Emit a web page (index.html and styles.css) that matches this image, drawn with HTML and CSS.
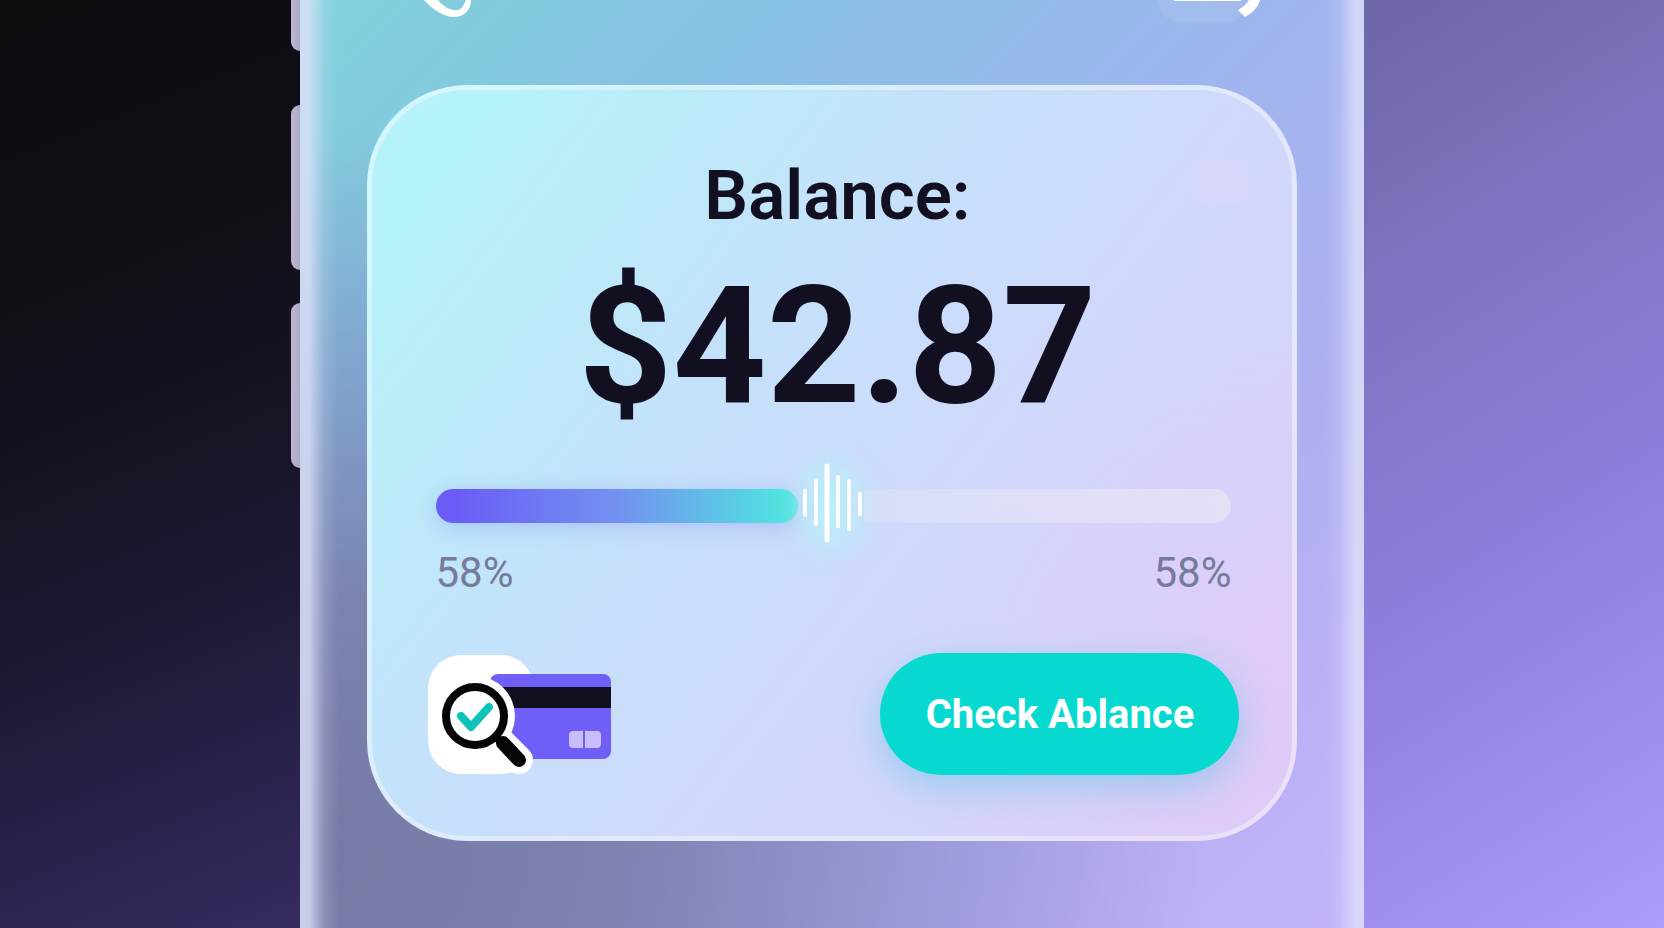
FILE: index.html
```html
<!DOCTYPE html>
<html lang="en">
<head>
  <meta charset="UTF-8">
  <meta name="viewport" content="width=device-width, initial-scale=1.0">
  <title>Balance</title>
  <link rel="stylesheet" href="styles.css">
</head>
<body>
  <div class="side side-left">
    <span class="key key-short"></span>
    <span class="key"></span>
    <span class="key"></span>
  </div>

  <main class="phone">
    <header class="topbar">
      <svg class="top-icon" width="50" height="24" viewBox="0 0 50 24" aria-hidden="true">
        <path fill="#fff" d="M0 0C9 10 20 17 30 17C40 17 47 10 47 0H42C40 5 37 10 34 10C27 11 20 7 14 0Z"/>
      </svg>
      <svg class="top-icon" width="104" height="24" viewBox="0 0 104 24" aria-hidden="true">
        <path fill="#fff" fill-opacity="0.07" d="M0 0C2 14 12 23 26 23H68C78 23 84 18 87 10L96 0Z"/>
        <path fill="#fff" d="M16 0H84V1H18Z"/>
        <path fill="#fff" d="M92 0H103C101 7 97 12 88 17L81 10C86 7 90 4 92 0Z"/>
      </svg>
    </header>

    <section class="card">
      <span class="ghost"></span>
      <h1 class="title">Balance:</h1>
      <p class="amount">$42.87</p>

      <div class="progress" role="progressbar" aria-label="Balance used" aria-valuenow="58" aria-valuemin="0" aria-valuemax="100">
        <div class="progress-fill"></div>
        <svg class="wave" width="66" height="86" viewBox="0 0 66 86" aria-hidden="true">
          <g stroke="#fff" stroke-width="4" stroke-linecap="round">
            <path d="M7 28V52M18 18V61M40 14V63M51 18V66M62 31V51"/>
            <path stroke-width="5" d="M29 3V77"/>
          </g>
        </svg>
        <div class="progress-rest"></div>
      </div>
      <div class="labels">
        <span>58%</span>
        <span>58%</span>
      </div>

      <div class="actions">
        <svg class="card-icon" width="184" height="120" viewBox="0 0 184 120" aria-hidden="true">
          <rect width="106" height="119" y="1" rx="33" fill="#fff"/>
          <rect x="62" y="20" width="121" height="85" rx="8" fill="#6f5ff6"/>
          <rect x="62" y="33" width="121" height="21" fill="#120f20"/>
          <path d="M145 77H155V94H145Q141 94 141 90V81Q141 77 145 77Z" fill="#c9bdfd"/>
          <path d="M157 77H169Q173 77 173 81V90Q173 94 169 94H157Z" fill="#c9bdfd"/>
          <!-- white halo behind the magnifier -->
          <circle cx="47" cy="62" r="40" fill="#fff"/>
          <rect x="60" y="88" width="20" height="20" fill="#fff"/>
          <path d="M73 88L91 106" stroke="#fff" stroke-width="28" stroke-linecap="round"/>
          <circle cx="47" cy="62" r="29" fill="#fff" stroke="#050505" stroke-width="8"/>
          <path d="M66 81L74 89" stroke="#050505" stroke-width="8"/>
          <path d="M75 89L91 106" stroke="#050505" stroke-width="14" stroke-linecap="round"/>
          <path d="M33 62L43 73L61 53" fill="none" stroke="#10c3b8" stroke-width="8" stroke-linecap="round" stroke-linejoin="round"/>
        </svg>
        <button class="check-btn" type="button">Check Ablance</button>
      </div>
    </section>
  </main>

  <div class="side side-right"></div>
</body>
</html>
```
FILE: styles.css
```css
* {
  box-sizing: border-box;
}

body {
  margin: 0;
  min-height: 100vh;
  display: grid;
  grid-template-columns: 1fr 64% 1fr;
  font-family: Roboto, Inter, sans-serif;
  color: #120f20;
  background-color: #0b0b10;
}

/* Backdrop on both sides of the phone */
.side-left {
  display: flex;
  flex-direction: column;
  align-items: flex-end;
  gap: 33px;
  background: linear-gradient(158deg, #0d0c11 0%, #100f16 32%, #1b1730 62%, #352b60 100%);
}

.side-right {
  background: linear-gradient(148deg, #6c65a6 0%, #7f74c2 28%, #9080e0 62%, #ae9bfa 100%);
}

.key {
  width: 9px;
  height: 165px;
  border-radius: 10px 0 0 10px;
  background: linear-gradient(to right, #bdb7d2, #aea9c9);
}

.key-short {
  height: 51px;
  margin-bottom: 21px;
  border-radius: 0 0 0 10px;
}

/* Phone */
.phone {
  padding: 0 67px 87px;
  background:
    linear-gradient(to right, rgba(222, 226, 250, 0.8) 0, rgba(222, 226, 250, 0.8) 9px, rgba(222, 226, 250, 0.62) 13px, rgba(222, 226, 250, 0.2) 24px, rgba(222, 226, 250, 0) 38px),
    linear-gradient(to left, rgba(224, 226, 252, 0.75) 0, rgba(224, 226, 252, 0.75) 9px, rgba(224, 226, 252, 0.6) 13px, rgba(224, 226, 252, 0.2) 24px, rgba(224, 226, 252, 0) 38px),
    radial-gradient(ellipse 85% 78% at 0% 92%, #7779a5 0%, rgba(119, 121, 165, 0.85) 35%, rgba(122, 120, 176, 0.4) 68%, rgba(125, 120, 185, 0) 100%),
    linear-gradient(135deg, #80d2da 0%, #86c3e3 22%, #9fb5ee 50%, #aeb0f0 70%, #c4b2fb 100%);
}

.topbar {
  display: flex;
  justify-content: space-between;
  align-items: flex-start;
  height: 85px;
  padding: 0 36px 0 57px;
}

.top-icon {
  display: block;
}

/* Glass card */
.card {
  position: relative;
  padding: 64px 53px 61px 56px;
  border: 5px solid rgba(255, 255, 255, 0.4);
  border-radius: 100px;
  background:
    radial-gradient(ellipse 42% 55% at 100% 85%, rgba(226, 200, 247, 0.75), rgba(226, 200, 247, 0)),
    linear-gradient(128deg, #b5f2fa 10%, #c4e2fa 37%, #d0d9fb 60%, #dacff8 100%);
  background-origin: border-box;
}

.ghost {
  position: absolute;
  top: 69px;
  right: 45px;
  width: 53px;
  height: 46px;
  border-radius: 14px;
  background-color: rgba(224, 216, 248, 0.4);
}

.title {
  margin: 0;
  padding-left: 8px;
  font-size: 69px;
  line-height: 84px;
  font-weight: 600;
  text-align: center;
}

.amount {
  margin: 18px 0 27px;
  padding-left: 8px;
  font-size: 164px;
  line-height: 180px;
  font-weight: 700;
  text-align: center;
}

.progress {
  display: flex;
  align-items: center;
  margin: 0 8px;
}

.progress-fill {
  width: 45.5%;
  height: 34px;
  border-radius: 17px;
  background: linear-gradient(to right, #6a5cf6 5%, #7391f0 50%, #50e2e0 95%);
  box-shadow: 0 4px 20px rgba(110, 120, 240, 0.3);
}

.wave {
  flex: none;
  overflow: visible;
  border-radius: 50%;
  background: radial-gradient(closest-side, rgba(180, 242, 248, 0.9), rgba(180, 240, 248, 0.35));
  box-shadow: 0 0 20px 6px rgba(180, 240, 248, 0.5);
}

.progress-rest {
  flex: 1;
  height: 34px;
  border-radius: 0 17px 17px 0;
  background: linear-gradient(to right, rgba(236, 232, 248, 0.3), rgba(230, 226, 246, 0.9));
}

.labels {
  display: flex;
  justify-content: space-between;
  margin: 2px 8px 58px;
  font-size: 42px;
  line-height: 44px;
  color: #767b9b;
}

.actions {
  display: flex;
  justify-content: space-between;
  align-items: center;
}

.check-btn {
  width: 359px;
  height: 122px;
  border: none;
  border-radius: 61px;
  font-family: inherit;
  font-size: 40px;
  font-weight: 700;
  color: #fff;
  background-color: #08d9d0;
  box-shadow: 0 12px 36px rgba(60, 190, 225, 0.4);
  cursor: pointer;
}

.check-btn:hover {
  background-color: #06cbc3;
}
```
